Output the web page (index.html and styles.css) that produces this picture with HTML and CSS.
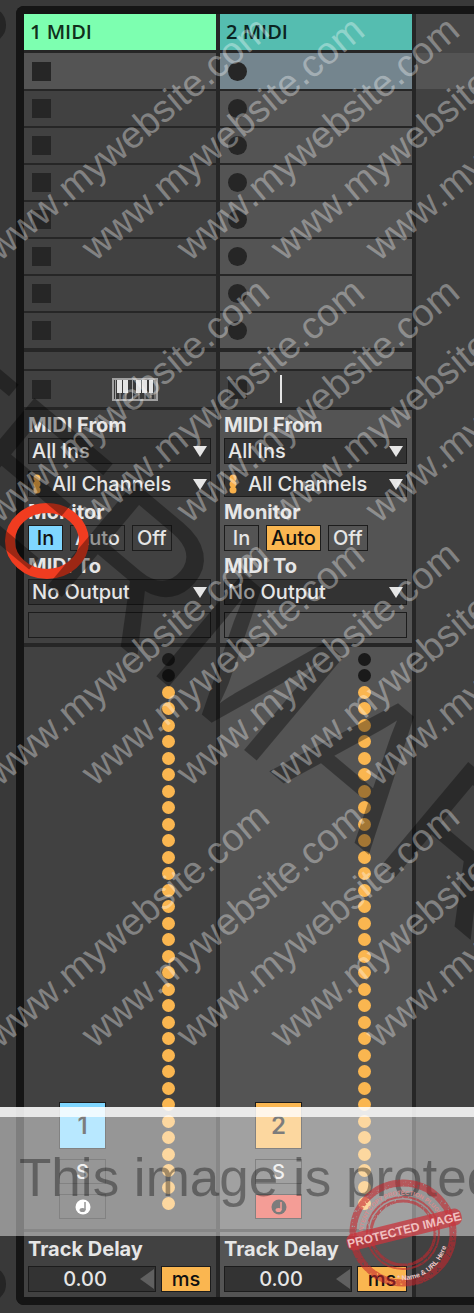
FILE: index.html
```html
<!DOCTYPE html>
<html lang="en">
<head>
    <meta charset="UTF-8">
    <meta name="viewport" content="width=device-width, initial-scale=1.0">
    <title>Session View</title>
    <link rel="stylesheet" href="styles.css">
</head>
<body>
    <span class="knob knob-top"></span>
    <span class="knob knob-bottom"></span>

    <main class="session">
        <section class="track">
            <h2 class="track-title green">1 MIDI</h2>
            <div class="slots">
                <div class="slot selected"><button class="stop" aria-label="Stop"></button></div>
                <div class="slot"><button class="stop" aria-label="Stop"></button></div>
                <div class="slot"><button class="stop" aria-label="Stop"></button></div>
                <div class="slot"><button class="stop" aria-label="Stop"></button></div>
                <div class="slot"><button class="stop" aria-label="Stop"></button></div>
                <div class="slot"><button class="stop" aria-label="Stop"></button></div>
                <div class="slot"><button class="stop" aria-label="Stop"></button></div>
                <div class="slot"><button class="stop" aria-label="Stop"></button></div>
            </div>
            <div class="spacer"></div>
            <div class="status">
                <button class="stop" aria-label="Stop all clips"></button>
                <svg class="piano" width="46" height="23" viewBox="0 0 46 23">
                    <rect x="1" y="1" width="44" height="21" fill="#3a3a3a" stroke="#a0a0a0" stroke-width="2"/>
                    <path d="M3.500 2v19M8 14v7M14 14v7M20.500 2v19M27 14v7M33 14v7M39 14v7M43 2v19" stroke="#a0a0a0" stroke-width="1"/>
                    <path d="M5 2h5v13h-5zM11 2h5v13h-5zM24 2h5v13h-5zM30 2h5v13h-5zM37 2h4v13h-4z" fill="#e4e4e4"/>
                </svg>
            </div>
            <div class="io">
                <label for="from1">MIDI From</label>
                <div class="chooser"><select id="from1"><option>All Ins</option></select></div>
                <div class="chooser channel">
                    <svg class="dots" width="8" height="20" viewBox="0 0 8 20"><circle cx="4" cy="4" r="3.500"/><circle cx="4" cy="10" r="3.500"/><circle cx="4" cy="16" r="3.500"/></svg>
                    <select aria-label="Input channel"><option>All Channels</option></select>
                </div>
                <span class="io-label">Monitor</span>
                <div class="monitor">
                    <button class="blue">In</button>
                    <button>Auto</button>
                    <button>Off</button>
                </div>
                <label for="to1">MIDI To</label>
                <div class="chooser"><select id="to1"><option>No Output</option></select></div>
                <input class="blank" type="text" aria-label="Output channel" readonly>
            </div>
            <div class="mixer">
                <div class="mix-buttons">
                    <button class="number blue">1</button>
                    <button>S</button>
                    <button aria-label="Arm"><svg width="16" height="16" viewBox="0 0 16 16"><circle cx="8" cy="8" r="7.500" fill="#fff"/><path d="M10 3v8" stroke="#404040" stroke-width="1.500"/><ellipse cx="7.500" cy="11" rx="3" ry="2" fill="#404040"/></svg></button>
                </div>
                <div class="meter"></div>
            </div>
            <div class="delay">
                <label for="delay1">Track Delay</label>
                <div class="delay-row">
                    <div class="delay-box"><input id="delay1" type="text" value="0.00"></div>
                    <button class="orange">ms</button>
                </div>
            </div>
        </section>

        <section class="track active">
            <h2 class="track-title teal">2 MIDI</h2>
            <div class="slots">
                <div class="slot selected"><button class="rec" aria-label="Record"></button></div>
                <div class="slot"><button class="rec" aria-label="Record"></button></div>
                <div class="slot"><button class="rec" aria-label="Record"></button></div>
                <div class="slot"><button class="rec" aria-label="Record"></button></div>
                <div class="slot"><button class="rec" aria-label="Record"></button></div>
                <div class="slot"><button class="rec" aria-label="Record"></button></div>
                <div class="slot"><button class="rec" aria-label="Record"></button></div>
                <div class="slot"><button class="rec" aria-label="Record"></button></div>
            </div>
            <div class="spacer"></div>
            <div class="status">
                <button class="stop" aria-label="Stop all clips"></button>
                <span class="cursor"></span>
            </div>
            <div class="io">
                <label for="from2">MIDI From</label>
                <div class="chooser"><select id="from2"><option>All Ins</option></select></div>
                <div class="chooser channel">
                    <svg class="dots" width="8" height="20" viewBox="0 0 8 20"><circle cx="4" cy="4" r="3.500"/><circle cx="4" cy="10" r="3.500"/><circle cx="4" cy="16" r="3.500"/></svg>
                    <select aria-label="Input channel"><option>All Channels</option></select>
                </div>
                <span class="io-label">Monitor</span>
                <div class="monitor">
                    <button>In</button>
                    <button class="orange">Auto</button>
                    <button>Off</button>
                </div>
                <label for="to2">MIDI To</label>
                <div class="chooser"><select id="to2"><option>No Output</option></select></div>
                <input class="blank" type="text" aria-label="Output channel" readonly>
            </div>
            <div class="mixer">
                <div class="mix-buttons">
                    <button class="number orange">2</button>
                    <button>S</button>
                    <button class="red" aria-label="Arm"><svg width="16" height="16" viewBox="0 0 16 16"><circle cx="8" cy="8" r="7.500" fill="#111"/><path d="M10 3v8" stroke="#eb4d40" stroke-width="1.500"/><ellipse cx="7.500" cy="11" rx="3" ry="2" fill="#eb4d40"/></svg></button>
                </div>
                <div class="meter"></div>
            </div>
            <div class="delay">
                <label for="delay2">Track Delay</label>
                <div class="delay-row">
                    <div class="delay-box"><input id="delay2" type="text" value="0.00"></div>
                    <button class="orange">ms</button>
                </div>
            </div>
        </section>

        <section class="empty">
            <div class="empty-head"></div>
            <div class="empty-slot"></div>
        </section>
    </main>

    <svg class="overlay" width="100%" height="100%" aria-hidden="true">
        <ellipse cx="47" cy="541" rx="37" ry="33" fill="none" stroke="#f03c20" stroke-width="10"/>
        <text class="big-mark" transform="translate(144 666) rotate(40)"><tspan x="0" text-anchor="end">WATER</tspan><tspan x="0">MARK</tspan></text>
        <g id="site-marks" class="site-marks"></g>
    </svg>

    <div class="notice">This image is protected</div>

    <svg class="stamp" width="120" height="110" viewBox="0 0 120 110">
        <defs>
            <path id="arc-top" d="M18 62a40 40 0 1 1 80 -10"/>
            <path id="arc-bottom" d="M52 102a46 46 0 0 0 51 -46"/>
            <filter id="grunge">
                <feTurbulence type="fractalNoise" baseFrequency="0.4" numOctaves="2"/>
                <feColorMatrix values="0 0 0 0 0  0 0 0 0 0  0 0 0 0 0  0 0 0 -5 4"/>
                <feComposite in="SourceGraphic" operator="in"/>
            </filter>
        </defs>
        <g class="rings" filter="url(#grunge)">
            <circle cx="58" cy="55" r="50" stroke-width="7"/>
            <circle cx="58" cy="55" r="36" stroke-width="2"/>
            <circle cx="58" cy="55" r="32" stroke-width="3"/>
        </g>
        <text class="stamp-small"><textPath href="#arc-top">CONTENT COPY PROTECTION PLUGIN</textPath></text>
        <text class="stamp-site"><textPath href="#arc-bottom">* Name &amp; URL Here</textPath></text>
        <g transform="rotate(-14 59 51)">
            <rect class="banner" x="0" y="43" width="118" height="17" rx="7"/>
            <text class="stamp-title" x="59" y="56">PROTECTED IMAGE</text>
        </g>
    </svg>

    <script>
        // level meters: two unlit dots on top of the lit ones
        document.querySelectorAll('.meter').forEach(meter => {
            for (let i = 0; i < 34; i++) {
                const dot = document.createElement('i');
                if (i < 2) dot.className = 'dark';
                meter.appendChild(dot);
            }
        });

        // repeated site address, four rows of five
        const marks = document.getElementById('site-marks');
        for (let row = 0; row < 4; row++) {
            for (let col = 0; col < 5; col++) {
                const text = document.createElementNS('http://www.w3.org/2000/svg', 'text');
                const x = Math.round(col * 94.8);
                const y = Math.round(262 + row * 262.4);
                text.setAttribute('transform', `translate(${x} ${y}) rotate(-40)`);
                text.textContent = 'www.mywebsite.com';
                marks.appendChild(text);
            }
        }
    </script>
</body>
</html>
```
FILE: styles.css
```css
* {
    box-sizing: border-box;
}

body {
    position: relative;
    display: flex;
    min-height: 100vh;
    margin: 0;
    padding: 6px 0 8px 16px;
    overflow: hidden;
    background-color: #393939;
    color: #e6e6e6;
    font-family: Inter, "Liberation Sans", sans-serif;
    font-size: 20px;
}

button, input, select {
    margin: 0;
    padding: 0;
    border: 0;
    border-radius: 0;
    background: none;
    color: inherit;
    font-family: inherit;
    font-size: 20px;
    font-weight: 500;
    outline: 0;
}

.knob {
    position: absolute;
    left: -16px;
    width: 22px;
    height: 30px;
    border-radius: 50%;
    background-color: #252525;
}

.knob-top {
    top: 10px;
}

.knob-bottom {
    bottom: 14px;
}

.session {
    display: flex;
    flex: 1;
    gap: 4px;
    border: 8px solid #151515;
    border-right: 0;
    border-radius: 8px 0 0 8px;
    background-color: #262626;
}

.track {
    display: flex;
    flex-direction: column;
    width: 192px;
}

.track-title {
    height: 36px;
    margin: 0 0 3px;
    padding-left: 6px;
    color: #10301c;
    font-family: "Open Sans", sans-serif;
    font-size: 20px;
    font-weight: 600;
    line-height: 36px;
}

.green {
    background-color: #7dffb0;
}

.teal {
    background-color: #55bdb0;
    color: #0b2422;
}

.slots {
    display: flex;
    flex-direction: column;
    gap: 2px;
    margin-bottom: 4px;
}

.slot {
    display: flex;
    align-items: center;
    height: 35px;
    padding-left: 8px;
    background-color: #414141;
}

.active .slot, .active .spacer, .active .io, .active .mixer, .active .delay {
    background-color: #545454;
}

.slot.selected {
    height: 36px;
    background-color: #545454;
}

.active .slot.selected {
    background-color: #74858e;
}

.stop, .rec {
    width: 19px;
    height: 19px;
    background-color: #262626;
}

.rec {
    border-radius: 50%;
}

.spacer {
    height: 17px;
    margin-bottom: 2px;
    background-color: #414141;
}

.status {
    display: flex;
    align-items: center;
    height: 36px;
    margin-bottom: 3px;
    padding-left: 8px;
    background-color: #414141;
}

.piano {
    margin-left: 61px;
}

.cursor {
    width: 2px;
    height: 28px;
    margin-left: 33px;
    background-color: #e6e6e6;
}

.io {
    padding: 0 5px 5px 4px;
    margin-bottom: 4px;
    background-color: #414141;
}

.io label, .io-label, .delay label {
    display: block;
    height: 28px;
    font-size: 20px;
    font-weight: 700;
    line-height: 30px;
}

.chooser {
    position: relative;
    height: 26px;
    border: 1px solid #1c1c1c;
    background-color: #333;
}

.chooser + .chooser, .chooser + .blank {
    margin-top: 7px;
}

.chooser::after {
    content: "";
    position: absolute;
    top: 7px;
    right: 3px;
    border: 7px solid transparent;
    border-top: 11px solid #e6e6e6;
    border-bottom: 0;
    pointer-events: none;
}

.chooser select {
    display: block;
    width: 100%;
    height: 24px;
    padding-left: 3px;
    line-height: 24px;
    appearance: none;
}

.channel {
    display: flex;
    align-items: center;
    padding-left: 4px;
}

.channel select {
    padding-left: 11px;
}

.dots {
    flex: none;
    fill: #f8b04a;
}

.monitor {
    display: flex;
    gap: 7px;
}

.monitor button {
    height: 26px;
    padding: 0 4px;
    border: 1px solid #1c1c1c;
    line-height: 24px;
}

.monitor button:first-child {
    width: 35px;
}

.track .blue {
    background-color: #7fd6ff;
    color: #111;
}

.track .orange {
    background-color: #fab650;
    color: #111;
}

.blank {
    display: block;
    width: 100%;
    height: 26px;
    border: 1px solid #1c1c1c;
}

.mixer {
    display: flex;
    flex: 1;
    align-items: flex-end;
    gap: 56px;
    margin-bottom: 3px;
    padding: 6px 0 10px 35px;
    background-color: #414141;
}

.mix-buttons {
    display: flex;
    flex-direction: column;
    gap: 10px;
    width: 47px;
}

.mix-buttons button {
    display: flex;
    align-items: center;
    justify-content: center;
    height: 25px;
    border: 1px solid #1c1c1c;
}

.mix-buttons .number {
    height: 47px;
    font-size: 24px;
    font-weight: 600;
}

.mix-buttons .red {
    background-color: #eb4d40;
}

.meter {
    display: flex;
    flex-direction: column;
    align-self: stretch;
    justify-content: space-between;
    margin-bottom: 9px;
}

.meter i {
    width: 13px;
    height: 13px;
    border-radius: 50%;
    background-color: #fab650;
}

.meter .dark {
    background-color: #1a1a1a;
}

.delay {
    padding: 3px 5px 5px 4px;
    background-color: #414141;
}

.delay-row {
    display: flex;
    gap: 5px;
    margin-top: 3px;
}

.delay label {
    line-height: 28px;
}

.delay-box {
    position: relative;
    flex: 1;
    height: 26px;
    border: 1px solid #1c1c1c;
    background-color: #333;
}

.delay-box::after {
    content: "";
    position: absolute;
    top: 2px;
    right: 1px;
    border: 10px solid transparent;
    border-right: 14px solid #606060;
    border-left: 0;
}

.delay-box input {
    width: 100%;
    height: 24px;
    padding-right: 14px;
    text-align: center;
}

.delay-row button {
    width: 50px;
    height: 26px;
    border: 1px solid #1c1c1c;
    line-height: 24px;
}

.empty {
    flex: 1;
    background-color: #414141;
}

.empty-head {
    height: 39px;
    background-color: #464646;
}

.empty-slot {
    height: 36px;
    background-color: #545454;
}

.overlay {
    position: absolute;
    top: 0;
    left: 0;
    pointer-events: none;
}

.big-mark {
    fill: #000;
    fill-opacity: 0.35;
    font-family: "Liberation Sans", Arial, sans-serif;
    font-size: 196px;
}

.site-marks {
    fill: #fff;
    fill-opacity: 0.35;
    font-family: "Liberation Sans", Arial, sans-serif;
    font-size: 38px;
    font-kerning: none;
}

.notice {
    position: absolute;
    right: 0;
    bottom: 77px;
    left: 0;
    height: 129px;
    padding-left: 19px;
    overflow: hidden;
    border-top: 10px solid rgba(255, 255, 255, 0.88);
    background-color: rgba(255, 255, 255, 0.45);
    background-clip: padding-box;
    color: rgba(0, 0, 0, 0.36);
    font-family: "Liberation Sans", Arial, sans-serif;
    font-size: 53px;
    line-height: 122px;
    white-space: nowrap;
    pointer-events: none;
}

.stamp {
    position: absolute;
    right: 9px;
    bottom: 25px;
    font-family: "Liberation Sans", Arial, sans-serif;
    font-weight: 700;
    pointer-events: none;
}

.rings {
    fill: none;
    stroke: #c4242c;
    stroke-opacity: 0.6;
}

.banner {
    fill: #c9343c;
    fill-opacity: 0.75;
}

.stamp-small {
    fill: #d88a8c;
    font-size: 6px;
}

.stamp-site {
    fill: #f0c8c8;
    font-size: 7px;
}

.stamp-title {
    fill: #f0c0c0;
    font-size: 12px;
    text-anchor: middle;
}
```
